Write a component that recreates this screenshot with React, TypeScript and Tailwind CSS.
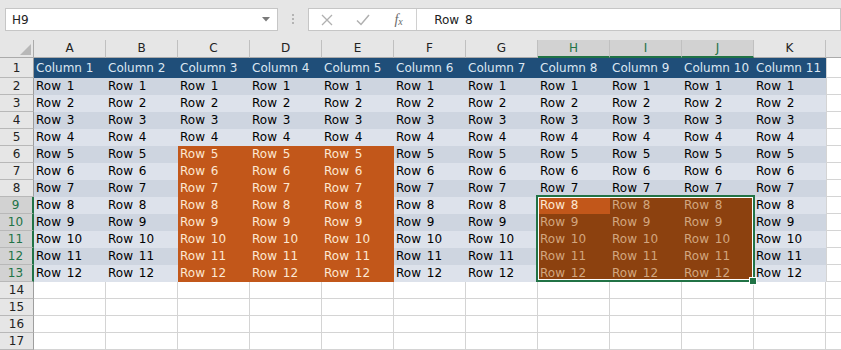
import React from "react";

const COLS = ["A", "B", "C", "D", "E", "F", "G", "H", "I", "J", "K"];

function isSelCol(c: number) {
  return c >= 7 && c <= 9;
}

function TopBar() {
  return (
    <div className="h-[40px] flex items-start">
      <div className="ml-[5px] mt-[8px] w-[276px] h-[23px] bg-white border border-[#c6c6c6] flex items-center pl-[6px] pr-[7px] text-[12px] text-[#222]">
        <span className="flex-1">H9</span>
        <svg width="8" height="5" viewBox="0 0 8 5">
          <path d="M0 0 L8 0 L4 4.5 Z" fill="#7a7a7a" />
        </svg>
      </div>
      <div className="w-[31px] h-[40px] flex flex-col items-center pt-[14px] gap-[2px]">
        <div className="w-[2px] h-[2px] bg-[#b4b4b4]" />
        <div className="w-[2px] h-[2px] bg-[#b4b4b4]" />
        <div className="w-[2px] h-[2px] bg-[#b4b4b4]" />
      </div>
      <div className="mt-[8px] w-[540px] h-[23px] bg-white border border-[#c6c6c6] flex items-center">
        <div className="w-[36px] flex justify-center">
          <svg width="12" height="12" viewBox="0 0 12 12">
            <path d="M1 1 L11 11 M11 1 L1 11" stroke="#b0b0b0" strokeWidth="1.3" fill="none" />
          </svg>
        </div>
        <div className="w-[36px] flex justify-center">
          <svg width="14" height="12" viewBox="0 0 14 12">
            <path d="M1 6.5 L5 10.5 L13 1" stroke="#b0b0b0" strokeWidth="1.5" fill="none" />
          </svg>
        </div>
        <div className="w-[35px] flex justify-center items-end text-[#6a6a6a] font-['Liberation_Serif'] italic">
          <span className="text-[14px] leading-[14px]">f</span>
          <span className="text-[10px] leading-[10px]">x</span>
        </div>
        <div className="h-[21px] border-l border-[#d0d0d0] flex-1 flex items-center pl-[17px] text-[12px] text-[#222] [word-spacing:2px]">
          Row 8
        </div>
      </div>
    </div>
  );
}

function HeaderRow() {
  return (
    <div className="h-[18px] flex">
      <div className="w-[34px] h-[18px] border-r border-b border-[#ababab] bg-[#e6e6e6] flex items-end justify-end pr-[2px] pb-[2px]">
        <svg width="11" height="11" viewBox="0 0 11 11">
          <path d="M11 0 L11 11 L0 11 Z" fill="#b8b8b8" />
        </svg>
      </div>
      {COLS.map((l, c) =>
        isSelCol(c) ? (
          <div
            key={l}
            className="w-[72px] h-[18px] bg-[#d2d2d2] border-r border-[#c0c0c0] border-b-2 border-b-[#217346] text-center text-[12px] leading-[17px] text-[#217346]"
          >
            {l}
          </div>
        ) : (
          <div
            key={l}
            className="w-[72px] h-[18px] bg-[#e6e6e6] border-r border-[#c0c0c0] border-b border-b-[#ababab] text-center text-[12px] leading-[17px] text-[#222]"
          >
            {l}
          </div>
        )
      )}
      <div className="flex-1 h-[18px] bg-[#e6e6e6] border-b border-[#ababab]" />
    </div>
  );
}

function RowHeader({ n, h }: { n: number; h: string }) {
  const sel = n >= 9 && n <= 13;
  if (sel) {
    return (
      <div
        className={
          "w-[34px] " +
          h +
          " bg-[#d2d2d2] border-b border-b-[#b8b8b8] border-r-2 border-r-[#217346] text-center text-[12px] text-[#217346] flex items-center justify-center pr-[1px]"
        }
      >
        {n}
      </div>
    );
  }
  return (
    <div
      className={
        "w-[34px] " +
        h +
        " bg-[#e6e6e6] border-b border-b-[#b8b8b8] border-r border-r-[#9e9e9e] text-center text-[12px] text-[#222] flex items-center justify-center"
      }
    >
      {n}
    </div>
  );
}

function DataCell({ r, c }: { r: number; c: number }) {
  const text = "Row " + (r - 1);
  const orange = (c >= 2 && c <= 4 && r >= 6) || (c >= 7 && c <= 9 && r >= 9);
  const sel = c >= 7 && c <= 9 && r >= 9;
  const active = c === 7 && r === 9;
  let cls = "";
  if (active) cls = "bg-[#c2571a] text-[#fde8d2]";
  else if (sel) cls = "bg-[#8c410f] text-[#d2a67f]";
  else if (orange) cls = "bg-[#c2571a] text-[#fde8d2]";
  else if (r % 2 === 0) cls = "bg-[#ced5e0] text-black";
  else cls = "bg-[#dde2eb] text-black";
  return (
    <div
      className={
        "w-[72px] h-[17px] pl-[2px] text-[12px] leading-[17px] whitespace-nowrap overflow-hidden [word-spacing:2px] " +
        cls
      }
    >
      {text}
    </div>
  );
}

export default function App() {
  const dataRows = [2, 3, 4, 5, 6, 7, 8, 9, 10, 11, 12, 13];
  const emptyRows = [14, 15, 16, 17];
  return (
    <div className="relative w-[841px] h-[350px] overflow-hidden bg-[#e6e6e6] font-['DejaVu_Sans',sans-serif]">
      <TopBar />
      <HeaderRow />
      {/* Row 1: table header */}
      <div className="h-[20px] flex">
        <RowHeader n={1} h="h-[20px]" />
        {COLS.map((l, c) => (
          <div
            key={l}
            className="w-[72px] h-[20px] pl-[2px] bg-[#1f4e79] text-[#dde7f2] text-[12px] leading-[20px] whitespace-nowrap overflow-hidden"
          >
            {"Column " + (c + 1)}
          </div>
        ))}
        <div className="flex-1 h-[20px] bg-white border-b border-l border-[#d4d4d4]" />
      </div>
      {dataRows.map((r) => (
        <div key={r} className="h-[17px] flex">
          <RowHeader n={r} h="h-[17px]" />
          {COLS.map((l, c) => (
            <DataCell key={l} r={r} c={c} />
          ))}
          <div className="flex-1 h-[17px] bg-white border-b border-l border-[#d4d4d4]" />
        </div>
      ))}
      {emptyRows.map((r) => (
        <div key={r} className="h-[17px] flex">
          <RowHeader n={r} h="h-[17px]" />
          {COLS.map((l) => (
            <div key={l} className="w-[72px] h-[17px] bg-white border-r border-b border-[#d4d4d4]" />
          ))}
          <div className="flex-1 h-[17px] bg-white border-b border-[#d4d4d4]" />
        </div>
      ))}
      {/* selection overlay */}
      <div className="absolute left-[536px] top-[195px] w-[219px] h-[87px] border-2 border-[#217346]">
        <div className="absolute inset-0 border border-white" />
      </div>
      <div className="absolute left-[749px] top-[277px] w-[8px] h-[8px] bg-[#217346] border border-white" />
    </div>
  );
}
